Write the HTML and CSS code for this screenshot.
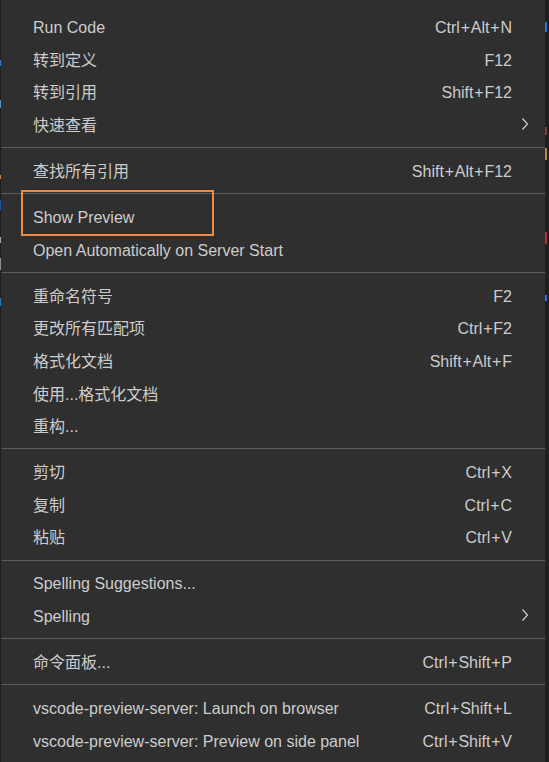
FILE: index.html
```html
<!DOCTYPE html>
<html lang="zh-CN">
<head>
<meta charset="utf-8">
<title>Context menu</title>
<link rel="stylesheet" href="styles.css">
</head>
<body>
<div class="editor">
  <div class="marks">
    <span class="mk mk-l" style="top:60px;height:6px;background:#3a7bd5"></span>
    <span class="mk mk-l" style="top:100px;height:8px;background:#5a8fc0"></span>
    <span class="mk mk-l" style="top:175px;height:4px;background:#c08a30"></span>
    <span class="mk mk-l" style="top:200px;height:10px;background:#2050a0"></span>
    <span class="mk mk-l" style="top:237px;height:6px;background:#8aa0b0"></span>
    <span class="mk mk-l" style="top:258px;height:12px;background:#8a9a8a"></span>
    <span class="mk mk-l" style="top:298px;height:8px;background:#2a7ab0"></span>
    <span class="mk mk-r" style="top:22px;height:10px;background:#2a6ee0"></span>
    <span class="mk mk-r" style="top:127px;height:8px;background:#8a3a2a"></span>
    <span class="mk mk-r" style="top:148px;height:12px;background:#b08a40"></span>
    <span class="mk mk-r" style="top:232px;height:12px;background:#b03030"></span>
    <span class="mk mk-r" style="top:295px;height:6px;background:#2a6ee0"></span>
  </div>
  <div class="menu">
    <div class="item"><span class="label">Run Code</span><span class="key">Ctrl<i>+</i>Alt<i>+</i>N</span></div>
    <div class="item"><span class="label">转到定义</span><span class="key">F12</span></div>
    <div class="item"><span class="label">转到引用</span><span class="key">Shift<i>+</i>F12</span></div>
    <div class="item"><span class="label">快速查看</span><span class="chev"><svg width="8" height="14" viewBox="0 0 8 14"><path d="M1.5 1.5 L6.5 7 L1.5 12.5" fill="none" stroke="#cccccc" stroke-width="1.2"/></svg></span></div>
    <div class="sep"></div>
    <div class="item"><span class="label">查找所有引用</span><span class="key">Shift<i>+</i>Alt<i>+</i>F12</span></div>
    <div class="sep"></div>
    <div class="item"><span class="label">Show Preview</span><span class="hl-box"></span></div>
    <div class="item"><span class="label">Open Automatically on Server Start</span></div>
    <div class="sep"></div>
    <div class="item"><span class="label">重命名符号</span><span class="key">F2</span></div>
    <div class="item"><span class="label">更改所有匹配项</span><span class="key">Ctrl<i>+</i>F2</span></div>
    <div class="item"><span class="label">格式化文档</span><span class="key">Shift<i>+</i>Alt<i>+</i>F</span></div>
    <div class="item"><span class="label">使用...格式化文档</span></div>
    <div class="item"><span class="label">重构...</span></div>
    <div class="sep"></div>
    <div class="item"><span class="label">剪切</span><span class="key">Ctrl<i>+</i>X</span></div>
    <div class="item"><span class="label">复制</span><span class="key">Ctrl<i>+</i>C</span></div>
    <div class="item"><span class="label">粘贴</span><span class="key">Ctrl<i>+</i>V</span></div>
    <div class="sep"></div>
    <div class="item"><span class="label">Spelling Suggestions...</span></div>
    <div class="item"><span class="label">Spelling</span><span class="chev"><svg width="8" height="14" viewBox="0 0 8 14"><path d="M1.5 1.5 L6.5 7 L1.5 12.5" fill="none" stroke="#cccccc" stroke-width="1.2"/></svg></span></div>
    <div class="sep"></div>
    <div class="item"><span class="label">命令面板...</span><span class="key">Ctrl<i>+</i>Shift<i>+</i>P</span></div>
    <div class="sep"></div>
    <div class="item"><span class="label">vscode-preview-server: Launch on browser</span><span class="key">Ctrl<i>+</i>Shift<i>+</i>L</span></div>
    <div class="item"><span class="label">vscode-preview-server: Preview on side panel</span><span class="key">Ctrl<i>+</i>Shift<i>+</i>V</span></div>
  </div>
</div>
</body>
</html>
```

FILE: styles.css
```css
html, body {
  margin: 0;
  padding: 0;
  background: #1f1f1f;
  width: 549px;
  height: 762px;
  overflow: hidden;
}

.editor {
  position: relative;
  width: 549px;
  height: 762px;
  background: #1f1f1f;
}

.mk {
  position: absolute;
  display: block;
}

.mk-l {
  left: 0;
  width: 1px;
}

.mk-r {
  left: 545px;
  width: 2px;
}

.menu {
  margin-left: 1px;
  width: 544px;
  height: 762px;
  box-sizing: border-box;
  padding-top: 11px;
  background: #2f2f2f;
  color: #cccccc;
  font-family: "Liberation Sans", "Noto Sans CJK SC", sans-serif;
  font-size: 16px;
  line-height: 20px;
  display: flex;
  flex-direction: column;
}

.item {
  box-sizing: border-box;
  height: 32.55px;
  flex: none;
  display: flex;
  align-items: center;
  padding: 2px 16px 0 32px;
  position: relative;
  white-space: nowrap;
}

.label {
  flex: 1;
}

.key {
  margin-right: 17px;
}

.key i {
  font-style: normal;
  padding: 0 0.8px;
}

.chev {
  display: flex;
  align-items: center;
  width: 8px;
  height: 14px;
  margin-bottom: 3px;
}

.sep {
  flex: none;
  height: 1px;
  margin: 6px 0 6.6px;
  background: #5c5c5c;
}

.hl-box {
  position: absolute;
  left: 20px;
  top: -11px;
  width: 193px;
  height: 46px;
  box-sizing: border-box;
  border: 2px solid #f48a3c;
}
```
